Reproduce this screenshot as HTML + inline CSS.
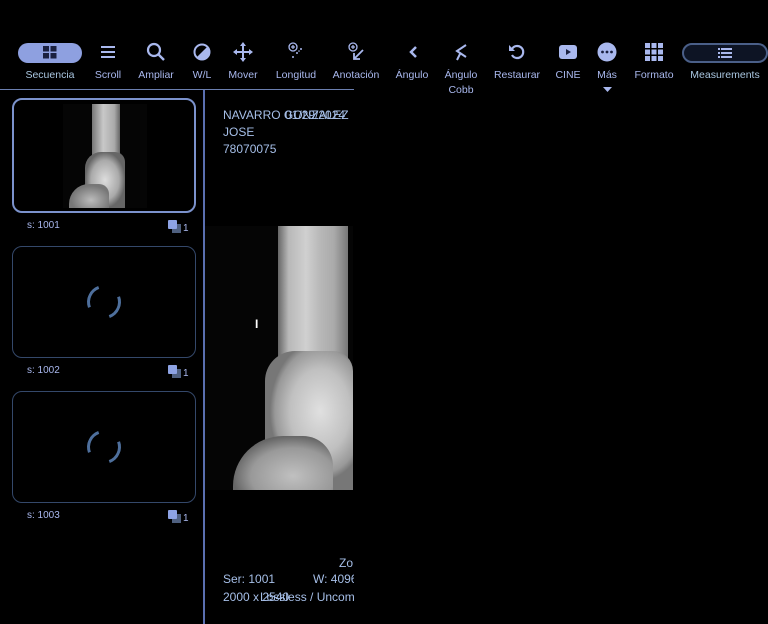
<!DOCTYPE html>
<html><head><meta charset="utf-8"><style>
*{margin:0;padding:0;box-sizing:border-box}
body{width:768px;height:624px;background:#000;position:relative;overflow:hidden;font-family:"Liberation Sans",sans-serif}
.lbl{position:absolute;top:68px;font-size:10.5px;color:#a9b8ee;text-align:center;width:80px;line-height:15px}
.ic{position:absolute;top:42px}
.thumb{position:absolute;left:12px;width:184px;border-radius:10px;border:1px solid #34486a;overflow:hidden}
.sl{position:absolute;left:27px;font-size:10px;color:#a9b8ee}
.cnt{position:absolute;left:168px;width:22px;height:14px;font-size:10px;color:#a9b8ee}
.cnt i{position:absolute;left:4px;top:4px;width:9px;height:9px;background:#4f6080}
.cnt b{position:absolute;left:0;top:0;width:9px;height:9px;background:#8ea3e4;border-radius:1px}
.cnt span{position:absolute;left:15px;top:3px}
.spin{position:absolute;left:50%;top:50%;width:34px;height:34px;margin:-17px 0 0 -17px;border-radius:50%;border:3px solid transparent;border-left-color:#4e6f9c;border-right-color:#4e6f9c;transform:rotate(25deg)}
.ov{position:absolute;font-size:12px;color:#a6bfe8;white-space:nowrap}
</style></head><body>
<!-- toolbar -->
<div style="position:absolute;left:18px;top:43px;width:64px;height:20px;border-radius:10px;background:#8ea0e0"></div>
<svg class="ic" style="left:43px;top:46px" width="14" height="13"><rect x="0" y="0" width="6" height="5.5" fill="#1a2040"/><rect x="7.5" y="0" width="6" height="5.5" fill="#1a2040"/><rect x="0" y="7" width="6" height="5.5" fill="#1a2040"/><rect x="7.5" y="7" width="6" height="5.5" fill="#1a2040"/></svg>
<div class="lbl" style="left:10px;top:68px;color:#a9c6e0">Secuencia</div>
<svg class="ic" style="left:100px;top:44px" width="16" height="16"><rect x="1" y="2" width="14" height="2" fill="#a9b8ee"/><rect x="1" y="7" width="14" height="2" fill="#a9b8ee"/><rect x="1" y="12" width="14" height="2" fill="#a9b8ee"/></svg>
<div class="lbl" style="left:68px">Scroll</div>
<svg class="ic" style="left:146px;top:42px" width="20" height="20"><circle cx="8" cy="8" r="6" stroke="#a9b8ee" stroke-width="2.2" fill="none"/><path d="M12.5 12.5 L18 18" stroke="#a9b8ee" stroke-width="2.4"/></svg>
<div class="lbl" style="left:116px">Ampliar</div>
<svg class="ic" style="left:192px;top:42px" width="20" height="20"><circle cx="10" cy="10" r="7.5" stroke="#a9b8ee" stroke-width="2" fill="none"/><path d="M15.3 4.7 A7.5 7.5 0 0 1 4.7 15.3 Z" fill="#a9b8ee"/></svg>
<div class="lbl" style="left:162px">W/L</div>
<svg class="ic" style="left:233px;top:42px" width="20" height="20"><path d="M10 2 V18 M2 10 H18" stroke="#a9b8ee" stroke-width="2"/><path d="M10 0 L13 4 H7Z M10 20 L13 16 H7Z M0 10 L4 7 V13Z M20 10 L16 7 V13Z" fill="#a9b8ee"/></svg>
<div class="lbl" style="left:203px">Mover</div>
<svg class="ic" style="left:286px;top:41px" width="20" height="20"><circle cx="7" cy="6" r="4" stroke="#a9b8ee" stroke-width="1.3" fill="none"/><path d="M7 4 V8 M5 6 H9" stroke="#a9b8ee" stroke-width="1.2"/><circle cx="15" cy="8" r="1" fill="#a9b8ee"/><circle cx="11" cy="12" r="1" fill="#a9b8ee"/><circle cx="7" cy="16" r="1" fill="#a9b8ee"/><circle cx="13" cy="10" r=".8" fill="#a9b8ee"/></svg>
<div class="lbl" style="left:256px">Longitud</div>
<svg class="ic" style="left:346px;top:41px" width="20" height="20"><circle cx="7" cy="6" r="4" stroke="#a9b8ee" stroke-width="1.3" fill="none"/><path d="M7 4 V8 M5 6 H9" stroke="#a9b8ee" stroke-width="1.2"/><path d="M17 9 L8 18 M8 12 V18 H14" stroke="#a9b8ee" stroke-width="1.8" fill="none"/></svg>
<div class="lbl" style="left:316px">Anotación</div>
<svg class="ic" style="left:406px;top:44px" width="14" height="16"><path d="M10 3 L5 8 L10 13" stroke="#a9b8ee" stroke-width="2.5" fill="none"/></svg>
<div class="lbl" style="left:372px">Ángulo</div>
<svg class="ic" style="left:452px;top:42px" width="20" height="20"><path d="M14 3 L5 9 L14 15 M8 12 L5 18" stroke="#a9b8ee" stroke-width="2" fill="none"/></svg>
<div class="lbl" style="left:421px">Ángulo<br>Cobb</div>
<svg class="ic" style="left:507px;top:42px" width="20" height="20"><path d="M5 7 A6 6 0 1 1 5 13" stroke="#a9b8ee" stroke-width="2.2" fill="none"/><path d="M2 3 V9 H8Z" fill="#a9b8ee"/></svg>
<div class="lbl" style="left:477px">Restaurar</div>
<svg class="ic" style="left:558px;top:44px" width="20" height="16"><rect x="1" y="1" width="18" height="14" rx="3" fill="#a9b8ee"/><path d="M8 5 L13 8 L8 11Z" fill="#1a2040"/></svg>
<div class="lbl" style="left:528px">CINE</div>
<svg class="ic" style="left:597px;top:42px" width="20" height="20"><circle cx="10" cy="10" r="9.5" fill="#a9b8ee"/><circle cx="5.5" cy="10" r="1.4" fill="#1a2040"/><circle cx="10" cy="10" r="1.4" fill="#1a2040"/><circle cx="14.5" cy="10" r="1.4" fill="#1a2040"/></svg>
<div class="lbl" style="left:567px">Más</div>
<svg style="position:absolute;left:603px;top:87px" width="9" height="5"><path d="M0 0 H9 L4.5 5Z" fill="#a9b8ee"/></svg>
<svg class="ic" style="left:645px;top:43px" width="18" height="18"><g fill="#a9b8ee"><rect x="0" y="0" width="5" height="5"/><rect x="6.5" y="0" width="5" height="5"/><rect x="13" y="0" width="5" height="5"/><rect x="0" y="6.5" width="5" height="5"/><rect x="6.5" y="6.5" width="5" height="5"/><rect x="13" y="6.5" width="5" height="5"/><rect x="0" y="13" width="5" height="5"/><rect x="6.5" y="13" width="5" height="5"/><rect x="13" y="13" width="5" height="5"/></g></svg>
<div class="lbl" style="left:614px">Formato</div>
<div style="position:absolute;left:682px;top:43px;width:86px;height:20px;border-radius:10px;border:2px solid #4a5f88;background:#0d1424"></div>
<svg style="position:absolute;left:718px;top:48px" width="14" height="10"><g fill="#a9b8ee"><rect x="0" y="0" width="2" height="2"/><rect x="3" y="0" width="11" height="2"/><rect x="0" y="4" width="2" height="2"/><rect x="3" y="4" width="11" height="2"/><rect x="0" y="8" width="2" height="2"/><rect x="3" y="8" width="11" height="2"/></g></svg>
<div class="lbl" style="left:680px;top:68px;width:90px;color:#a9c6e0">Measurements</div>

<!-- dividers -->
<div style="position:absolute;left:0;top:89px;width:354px;height:1px;background:#6b7fb0"></div>
<div style="position:absolute;left:203px;top:90px;width:2px;height:534px;background:#5a6fb0"></div>

<!-- thumbnails -->
<div class="thumb" style="top:98px;height:115px;border:2px solid #7b92cc">
  <div style="position:absolute;left:49px;top:4px;width:84px;height:104px;background:#050505;overflow:hidden">
    <div style="position:absolute;left:29px;top:0;width:28px;height:55px;background:linear-gradient(90deg,#777,#c8c8c8 40%,#aaa 80%,#666)"></div>
    <div style="position:absolute;left:22px;top:48px;width:40px;height:60px;border-radius:16px 10px 0 0;background:radial-gradient(ellipse 20px 28px at 20px 28px,#ddd,#aaa 70%,#666 100%)"></div>
    <div style="position:absolute;left:6px;top:80px;width:40px;height:30px;border-radius:20px 10px 0 0;background:radial-gradient(ellipse 22px 16px at 22px 16px,#bbb,#777 90%)"></div>
  </div>
</div>
<div class="sl" style="top:220px">s: 1001</div>
<div class="cnt" style="top:220px"><i></i><b></b><span>1</span></div>
<div class="thumb" style="top:246px;height:112px"><div class="spin"></div></div>
<div class="sl" style="top:365px">s: 1002</div>
<div class="cnt" style="top:365px"><i></i><b></b><span>1</span></div>
<div class="thumb" style="top:391px;height:112px"><div class="spin"></div></div>
<div class="sl" style="top:510px">s: 1003</div>
<div class="cnt" style="top:510px"><i></i><b></b><span>1</span></div>

<!-- viewport -->
<div style="position:absolute;left:205px;top:226px;width:148px;height:264px;background:#050505;overflow:hidden">
  <div style="position:absolute;left:73px;top:0;width:70px;height:140px;background:linear-gradient(90deg,#666,#b8b8b8 15%,#d0d0d0 40%,#b8b8b8 60%,#aaa 80%,#777)"></div>
  <div style="position:absolute;left:60px;top:125px;width:88px;height:150px;border-radius:30px 20px 0 0;background:radial-gradient(ellipse 50px 70px at 55px 60px,#e0e0e0,#c0c0c0 60%,#999 90%,#777 100%)"></div>
  <div style="position:absolute;left:28px;top:210px;width:100px;height:60px;border-radius:50px 30px 0 0;background:radial-gradient(ellipse 60px 40px at 60px 40px,#c0c0c0,#999 70%,#666 100%)"></div>
  <div style="position:absolute;left:50px;top:91px;font-size:12px;font-weight:bold;color:#fff">I</div>
</div>
<div class="ov" style="left:223px;top:108px">NAVARRO GONZALEZ</div>
<div class="ov" style="left:285px;top:108px">01/29/2024</div>
<div class="ov" style="left:223px;top:125px">JOSE</div>
<div class="ov" style="left:223px;top:142px">78070075</div>
<div class="ov" style="left:339px;top:556px">Zo</div>
<div class="ov" style="left:223px;top:572px">Ser: 1001</div>
<div class="ov" style="left:313px;top:572px">W: 4096</div>
<div class="ov" style="left:223px;top:590px">2000 x 2540</div>
<div class="ov" style="left:260px;top:590px">Lossless / Uncompressed</div>
<div style="position:absolute;left:354px;top:100px;width:414px;height:524px;background:#000"></div>
</body></html>
